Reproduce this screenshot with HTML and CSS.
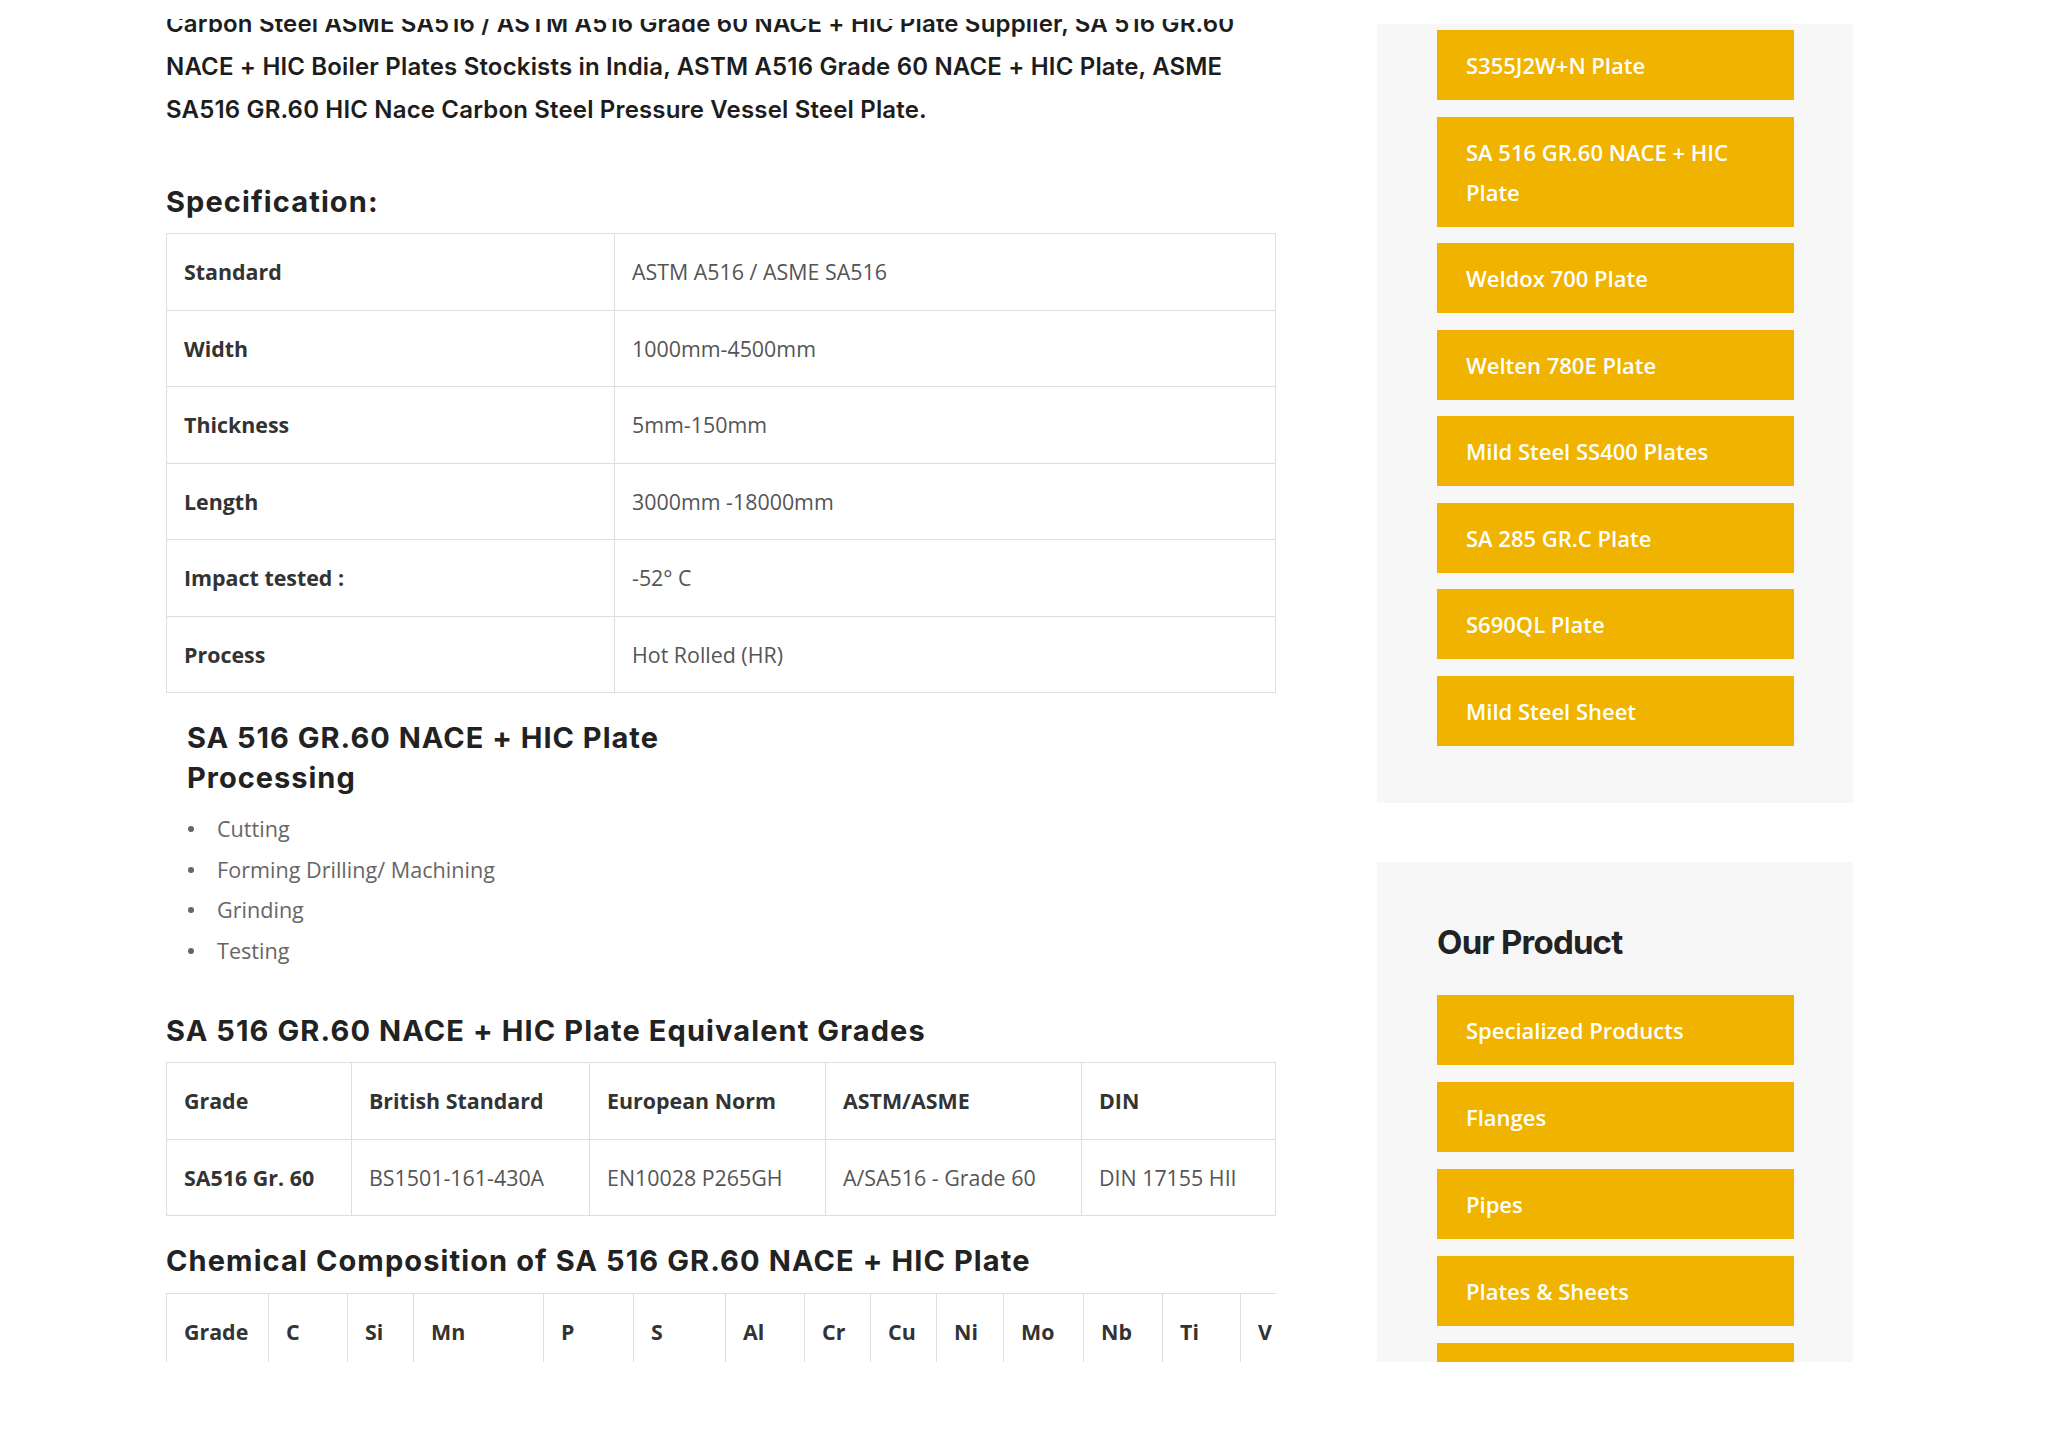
FILE: index.html
```html
<!DOCTYPE html>
<html lang="en">
<head>
<meta charset="utf-8">
<title>SA 516 GR.60 NACE + HIC Plate</title>
<link rel="stylesheet" href="styles.css">
</head>
<body>
<div class="viewport">
  <div class="top-mask"></div>
  <div class="layout">
    <main class="content">
      <p class="intro">Carbon Steel ASME SA516 / ASTM A516 Grade 60 NACE + HIC Plate Supplier, SA 516 GR.60<br>NACE + HIC Boiler Plates Stockists in India, ASTM A516 Grade 60 NACE + HIC Plate, ASME<br>SA516 GR.60 HIC Nace Carbon Steel Pressure Vessel Steel Plate.</p>

      <h2 class="section-title spec-title">Specification:</h2>
      <table class="data-table spec-table">
        <colgroup><col class="spec-key"><col></colgroup>
        <tbody>
          <tr><td class="label">Standard</td><td>ASTM A516 / ASME SA516</td></tr>
          <tr><td class="label">Width</td><td>1000mm-4500mm</td></tr>
          <tr><td class="label">Thickness</td><td>5mm-150mm</td></tr>
          <tr><td class="label">Length</td><td>3000mm -18000mm</td></tr>
          <tr><td class="label">Impact tested :</td><td>-52° C</td></tr>
          <tr><td class="label">Process</td><td>Hot Rolled (HR)</td></tr>
        </tbody>
      </table>

      <section class="processing">
        <h3 class="processing-title">SA 516 GR.60 NACE + HIC Plate Processing</h3>
        <ul class="bullets">
          <li>Cutting</li>
          <li>Forming Drilling/ Machining</li>
          <li>Grinding</li>
          <li>Testing</li>
        </ul>
      </section>

      <h2 class="section-title equiv-title">SA 516 GR.60 NACE + HIC Plate Equivalent Grades</h2>
      <table class="data-table equiv-table">
        <colgroup><col class="eq-1"><col class="eq-2"><col class="eq-3"><col class="eq-4"><col></colgroup>
        <tbody>
          <tr class="head-row"><td>Grade</td><td>British Standard</td><td>European Norm</td><td>ASTM/ASME</td><td>DIN</td></tr>
          <tr><td class="label">SA516 Gr. 60</td><td>BS1501-161-430A</td><td>EN10028 P265GH</td><td>A/SA516 - Grade 60</td><td>DIN 17155 HII</td></tr>
        </tbody>
      </table>

      <h2 class="section-title chem-title">Chemical Composition of SA 516 GR.60 NACE + HIC Plate</h2>
      <div class="table-scroll">
        <table class="data-table chem-table">
          <colgroup>
            <col class="c-grade"><col class="c-c"><col class="c-si"><col class="c-mn"><col class="c-p"><col class="c-s"><col class="c-al"><col class="c-cr"><col class="c-cu"><col class="c-ni"><col class="c-mo"><col class="c-nb"><col class="c-ti"><col class="c-v">
          </colgroup>
          <tbody>
            <tr class="head-row"><td>Grade</td><td>C</td><td>Si</td><td>Mn</td><td>P</td><td>S</td><td>Al</td><td>Cr</td><td>Cu</td><td>Ni</td><td>Mo</td><td>Nb</td><td>Ti</td><td>V</td></tr>
          </tbody>
        </table>
      </div>
    </main>

    <aside class="sidebar">
      <div class="widget widget-links">
        <a class="side-btn" href="#">S355J2W+N Plate</a>
        <a class="side-btn" href="#">SA 516 GR.60 NACE + HIC Plate</a>
        <a class="side-btn" href="#">Weldox 700 Plate</a>
        <a class="side-btn" href="#">Welten 780E Plate</a>
        <a class="side-btn" href="#">Mild Steel SS400 Plates</a>
        <a class="side-btn" href="#">SA 285 GR.C Plate</a>
        <a class="side-btn" href="#">S690QL Plate</a>
        <a class="side-btn" href="#">Mild Steel Sheet</a>
      </div>
      <div class="widget widget-products">
        <h3 class="widget-title">Our Product</h3>
        <a class="side-btn" href="#">Specialized Products</a>
        <a class="side-btn" href="#">Flanges</a>
        <a class="side-btn" href="#">Pipes</a>
        <a class="side-btn" href="#">Plates &amp; Sheets</a>
        <a class="side-btn" href="#">Bars</a>
      </div>
    </aside>
  </div>
</div>
</body>
</html>
```

FILE: styles.css
```css
html, body {
  margin: 0;
  padding: 0;
  background: #ffffff;
}

.viewport {
  position: relative;
  height: 1362px;
  overflow: hidden;
}

/* white strip of the fixed header edge that hides the top of the scrolled text */
.top-mask {
  position: absolute;
  left: 0;
  top: 0;
  right: 0;
  height: 19px;
  background: #ffffff;
  z-index: 5;
}

.layout {
  display: flex;
  align-items: flex-start;
  padding-left: 166px;
}

.content {
  flex: none;
  width: 1110px;
}

.sidebar {
  flex: none;
  width: 476px;
  margin-left: 101px;
  margin-top: 24px;
}

/* ---------- main column ---------- */
.intro {
  margin: 0;
  padding-top: 2px;
  font-family: "Inter", "Liberation Sans", sans-serif;
  font-weight: 600;
  font-size: 24px;
  line-height: 43px;
  letter-spacing: 0.17px;
  color: #1d1d1d;
}

.section-title {
  margin: 0 0 14px;
  font-family: "Inter", "Liberation Sans", sans-serif;
  font-weight: 700;
  font-size: 29px;
  line-height: 35px;
  letter-spacing: 1.1px;
  color: #222222;
}

.spec-title {
  margin-top: 53px;
}

.equiv-title {
  margin-top: 42px;
}

.chem-title {
  margin-top: 26.5px;
  margin-bottom: 15.5px;
}

.data-table {
  width: 100%;
  border-collapse: collapse;
  table-layout: fixed;
  font-family: "Open Sans", "Liberation Sans", sans-serif;
  font-size: 21.4px;
  color: #555555;
}

.data-table td {
  border: 1px solid #dedede;
  padding: 22px 17px;
  line-height: 31.5px;
  text-align: left;
  vertical-align: middle;
  white-space: nowrap;
}

.data-table .label,
.data-table .head-row td {
  font-weight: 700;
  color: #333333;
}

.spec-key { width: 448px; }

.eq-1 { width: 185px; }
.eq-2 { width: 238px; }
.eq-3 { width: 236px; }
.eq-4 { width: 256px; }

.processing {
  box-sizing: border-box;
  width: 555px;
  margin-top: 25px;
  padding-left: 21px;
}

.processing-title {
  margin: 0 0 11px;
  font-family: "Inter", "Liberation Sans", sans-serif;
  font-weight: 700;
  font-size: 29px;
  line-height: 40px;
  letter-spacing: 1px;
  color: #222222;
}

.bullets {
  list-style: none;
  margin: 0;
  padding: 0;
}

.bullets li {
  display: flex;
  align-items: center;
  font-family: "Open Sans", "Liberation Sans", sans-serif;
  font-size: 21.6px;
  line-height: 40.5px;
  color: #666666;
}

.bullets li::before {
  content: "";
  flex: none;
  width: 6px;
  height: 6px;
  border-radius: 50%;
  background: #666666;
  margin: 0 23px 0 1px;
}

.table-scroll {
  width: 1110px;
  overflow: hidden;
}

.chem-table {
  width: 1160px;
}

.c-grade { width: 102px; }
.c-c { width: 79px; }
.c-si { width: 66px; }
.c-mn { width: 130px; }
.c-p { width: 90px; }
.c-s { width: 92px; }
.c-al { width: 79px; }
.c-cr { width: 66px; }
.c-cu { width: 66px; }
.c-ni { width: 67px; }
.c-mo { width: 80px; }
.c-nb { width: 79px; }
.c-ti { width: 78px; }
.c-v { width: 86px; }

/* ---------- sidebar ---------- */
.widget {
  background: #f7f7f7;
  padding: 6px 59px 41px 60px;
}

.widget-links .side-btn {
  margin-bottom: 16.5px;
}

.widget-products {
  margin-top: 59px;
  padding-top: 59px;
}

.widget-title {
  margin: 0 0 32px;
  font-family: "Inter", "Liberation Sans", sans-serif;
  font-weight: 700;
  font-size: 33px;
  line-height: 42px;
  letter-spacing: -0.8px;
  color: #222222;
}

.side-btn {
  display: block;
  margin-bottom: 17px;
  padding: 15px 29px;
  background: #f0b400;
  color: #ffffff;
  font-family: "Open Sans", "Liberation Sans", sans-serif;
  font-weight: 600;
  font-size: 22px;
  line-height: 40px;
  text-decoration: none;
}
```
